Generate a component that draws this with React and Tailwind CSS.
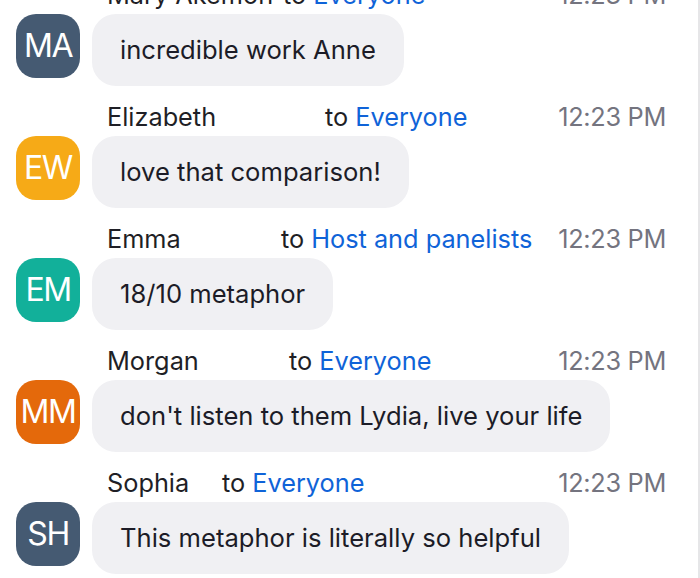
import React from "react";

const messages = [
  {
    initials: "MA",
    color: "bg-[#455a72]",
    name: "Mary Akemon",
    nameWidth: "w-[176px]",
    to: "Everyone",
    text: "incredible work Anne",
  },
  {
    initials: "EW",
    color: "bg-[#f6aa17]",
    name: "Elizabeth",
    nameWidth: "w-[218px]",
    to: "Everyone",
    text: "love that comparison!",
  },
  {
    initials: "EM",
    color: "bg-[#12b09a]",
    name: "Emma",
    nameWidth: "w-[174px]",
    to: "Host and panelists",
    text: "18/10 metaphor",
  },
  {
    initials: "MM",
    color: "bg-[#e4690b]",
    name: "Morgan",
    nameWidth: "w-[182px]",
    to: "Everyone",
    text: "don't listen to them Lydia, live your life",
  },
  {
    initials: "SH",
    color: "bg-[#455a72]",
    name: "Sophia",
    nameWidth: "w-[115px]",
    to: "Everyone",
    text: "This metaphor is literally so helpful",
  },
];

const ChatMessage = ({ msg }) => (
  <div className="flex flex-col">
    {/* Header: sender, recipient, time */}
    <div className="flex items-center justify-between h-[30px] pl-[107px] pr-[32px] text-[25.3px]">
      <div className="flex items-center whitespace-nowrap">
        <span className={`${msg.nameWidth} text-[#1f1f26]`}>{msg.name}</span>
        <span className="text-[#1f1f26]">to</span>
        <span className="ml-[7px] text-[#0f63d8]">{msg.to}</span>
      </div>
      <span className="text-[#74747f] tracking-[-0.3px]">12:23 PM</span>
    </div>

    {/* Avatar + bubble */}
    <div className="flex items-start gap-3 mt-1 pl-4">
      <div
        className={`${msg.color} w-16 h-16 rounded-[20px] flex items-center justify-center text-white text-[32px] tracking-[-1.5px]`}
      >
        {msg.initials}
      </div>
      <div className="h-[72px] flex items-center px-7 rounded-[24px] bg-[#f0f0f3] text-[#1c1c27] text-[25.6px] whitespace-nowrap">
        {msg.text}
      </div>
    </div>
  </div>
);

const App = () => {
  return (
    <div
      className="w-[700px] h-[578px] overflow-hidden bg-white border-r-2 border-[#e6e6e8]"
      style={{ fontFamily: "Inter, 'Noto Sans', sans-serif" }}
    >
      <div className="flex flex-col gap-4 -mt-[20px]">
        {messages.map((msg) => (
          <ChatMessage key={msg.initials + msg.name} msg={msg} />
        ))}
      </div>
    </div>
  );
};

export default App;
